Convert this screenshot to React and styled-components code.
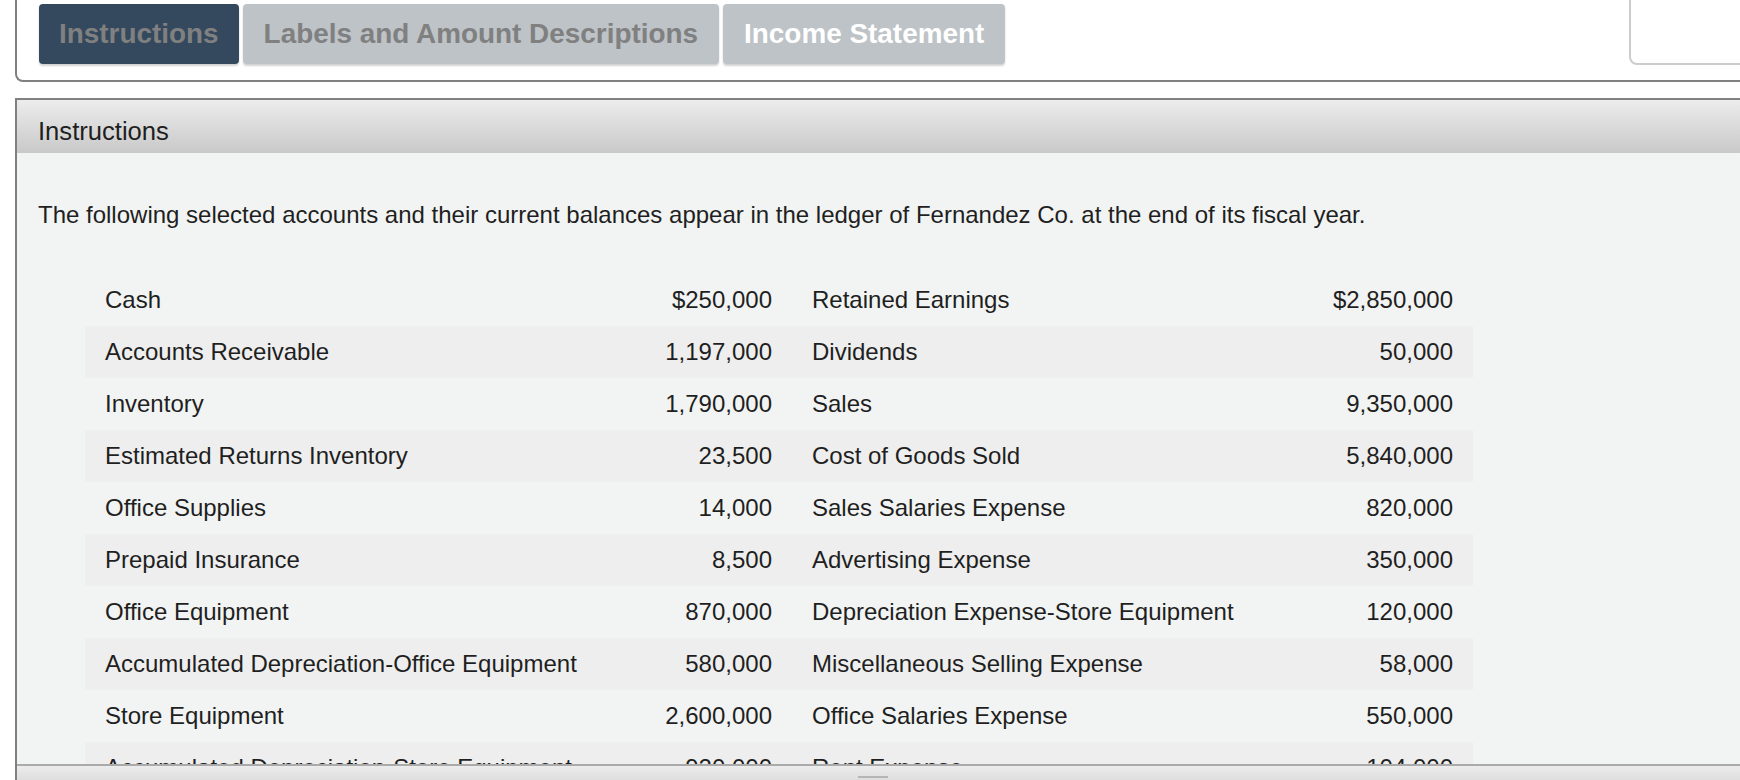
import React from "react";
import styled, { createGlobalStyle } from "styled-components";

const GlobalStyle = createGlobalStyle`
  html, body {
    margin: 0;
    padding: 0;
    background: #ffffff;
    overflow: hidden;
  }
  body {
    font-family: "Liberation Sans", Arial, Helvetica, sans-serif;
    color: #1f1f1f;
  }
`;

const Page = styled.div`
  width: 1740px;
  height: 780px;
  overflow: hidden;
  padding-left: 15px;
  box-sizing: border-box;
  display: flex;
  flex-direction: column;
`;

const TopPanel = styled.div`
  margin-right: -40px;
  height: 82px;
  box-sizing: border-box;
  border-left: 2px solid #808080;
  border-bottom: 2px solid #808080;
  border-bottom-left-radius: 8px;
  padding: 4px 0 0 22px;
  display: flex;
  align-items: flex-start;
`;

const TabList = styled.div`
  display: flex;
  gap: 4px;
`;

const Tab = styled.div`
  height: 60px;
  box-sizing: border-box;
  padding: 0 ${(p) => p.$pad || 21}px;
  display: flex;
  align-items: center;
  border-radius: 4px;
  background: ${(p) => (p.$active ? "#34495e" : "#bdc3c7")};
  color: ${(p) => (p.$light ? "#ffffff" : "#808080")};
  font-size: 27.9px;
  font-weight: 700;
  white-space: nowrap;
  box-shadow: 0 2px 2px rgba(0, 0, 0, 0.18);
`;

const Spacer = styled.div`
  flex: 1;
`;

const CornerBox = styled.div`
  width: 151px;
  height: 73px;
  margin-top: -12px;
  box-sizing: border-box;
  border: 2px solid #cccccc;
  border-radius: 8px;
  background: #ffffff;
`;

const MainPanel = styled.div`
  margin-top: 16px;
  margin-right: -40px;
  flex: 1;
  min-height: 0;
  border-left: 2px solid #808080;
  border-top: 2px solid #808080;
  display: flex;
  flex-direction: column;
  background: #f2f4f3;
`;

const PanelHeader = styled.div`
  height: 53px;
  flex: none;
  box-sizing: border-box;
  padding: 17px 0 0 21px;
  background: linear-gradient(to bottom, #ececec 0%, #c9c9c9 100%);
  font-size: 25.6px;
  line-height: 1.15;
  color: #1f1f1f;
`;

const PanelBody = styled.div`
  flex: 1;
  min-height: 0;
  overflow: hidden;
  padding: 47.6px 0 0 21px;
  background: #f2f4f3;
`;

const Intro = styled.p`
  margin: 0;
  font-size: 24px;
  line-height: 1.15;
  color: #1f1f1f;
  white-space: nowrap;
`;

const Ledger = styled.div`
  margin: 46px 0 0 47px;
  width: 1388px;
  display: grid;
  grid-template-columns: 560px 147px 510px 171px;
`;

const Row = styled.div`
  display: contents;
  & > div {
    background: ${(p) => (p.$striped ? "#eeeeee" : "transparent")};
  }
`;

const Cell = styled.div`
  height: 52px;
  padding: 0 20px;
  display: flex;
  align-items: center;
  justify-content: ${(p) => (p.$amount ? "flex-end" : "flex-start")};
  font-size: 24px;
  color: #1f1f1f;
  white-space: nowrap;
`;

const Footer = styled.div`
  flex: none;
  height: 16px;
  box-sizing: border-box;
  border-top: 2px solid #aaaaaa;
  background: linear-gradient(to bottom, #ececec, #dedede);
  display: flex;
  justify-content: center;
`;

const Grip = styled.div`
  width: 30px;
  height: 2px;
  margin-top: 10px;
  margin-left: -51px;
  background: #b5b5b5;
`;

const rows = [
  ["Cash", "$250,000", "Retained Earnings", "$2,850,000"],
  ["Accounts Receivable", "1,197,000", "Dividends", "50,000"],
  ["Inventory", "1,790,000", "Sales", "9,350,000"],
  ["Estimated Returns Inventory", "23,500", "Cost of Goods Sold", "5,840,000"],
  ["Office Supplies", "14,000", "Sales Salaries Expense", "820,000"],
  ["Prepaid Insurance", "8,500", "Advertising Expense", "350,000"],
  ["Office Equipment", "870,000", "Depreciation Expense-Store Equipment", "120,000"],
  ["Accumulated Depreciation-Office Equipment", "580,000", "Miscellaneous Selling Expense", "58,000"],
  ["Store Equipment", "2,600,000", "Office Salaries Expense", "550,000"],
  ["Accumulated Depreciation-Store Equipment", "920,000", "Rent Expense", "104,000"],
  ["Accounts Payable", "240,000", "Insurance Expense", "18,000"],
];

export default function App() {
  return (
    <>
      <GlobalStyle />
      <Page>
        <TopPanel>
          <TabList>
            <Tab $active $pad={20}>Instructions</Tab>
            <Tab>Labels and Amount Descriptions</Tab>
            <Tab $light>Income Statement</Tab>
          </TabList>
          <Spacer />
          <CornerBox />
        </TopPanel>
        <MainPanel>
          <PanelHeader>Instructions</PanelHeader>
          <PanelBody>
            <Intro>
              The following selected accounts and their current balances appear in the ledger of Fernandez Co. at the end of its fiscal year.
            </Intro>
            <Ledger>
              {rows.map((r, i) => (
                <Row key={i} $striped={i % 2 === 1}>
                  <Cell>{r[0]}</Cell>
                  <Cell $amount>{r[1]}</Cell>
                  <Cell>{r[2]}</Cell>
                  <Cell $amount>{r[3]}</Cell>
                </Row>
              ))}
            </Ledger>
          </PanelBody>
          <Footer>
            <Grip />
          </Footer>
        </MainPanel>
      </Page>
    </>
  );
}
